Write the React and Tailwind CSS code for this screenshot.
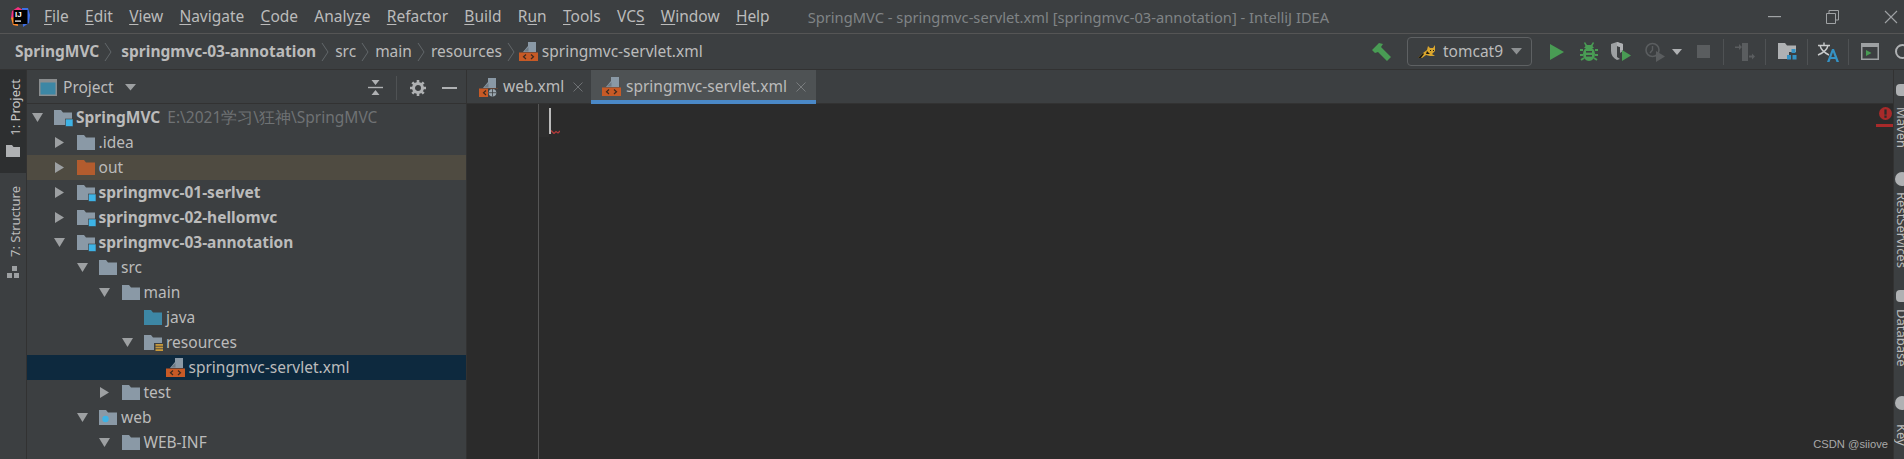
import React from "react";

const U = ({ children }) => <span className="underline underline-offset-2">{children}</span>;

function Logo() {
  return (
    <svg width="22" height="22" viewBox="0 0 22 22" className="shrink-0">
      <path d="M3 5 L9 1 L14 4 L8 12 L2 12 Z" fill="#f5317f" />
      <path d="M2 12 L8 10 L9 20 L4 19 Z" fill="#ff8a2a" />
      <path d="M13 2 L19 2 L21 9 L20 17 L14 21 Z" fill="#3d6fe8" />
      <rect x="4.5" y="4" width="14" height="14" fill="#000" />
      <text x="6" y="11" fontSize="8" fontWeight="700" fill="#fff" fontFamily="Liberation Sans">IJ</text>
      <rect x="6" y="14.5" width="6" height="1.2" fill="#fff" />
    </svg>
  );
}

function Folder({ color = "#8a99a6", badge, className = "" }) {
  return (
    <svg width="18" height="15" viewBox="0 0 18 15" className={`shrink-0 overflow-visible ${className}`}>
      <path d="M0 0 H7 L9 2.5 H18 V15 H0 Z" fill={color} />
      {badge === "module" && <rect x="11.5" y="9" width="7.5" height="7.5" fill="#3db3e6" stroke="#3c3f41" strokeWidth="0.6" />}
      {badge === "web" && <circle cx="6.5" cy="9" r="3.2" fill="#3db3e6" />}
      {badge === "res" && (
        <g>
          <rect x="10" y="8" width="9" height="8" fill="#3c3f41" />
          <rect x="11.5" y="9" width="7.5" height="1.8" fill="#c99a3a" />
          <rect x="11.5" y="11.6" width="7.5" height="1.8" fill="#c99a3a" />
          <rect x="11.5" y="14.2" width="7.5" height="1.8" fill="#c99a3a" />
        </g>
      )}
    </svg>
  );
}

function XmlIcon({ globe }) {
  return (
    <svg width="19" height="19" viewBox="0 0 19 19" className="shrink-0">
      <path d="M4 10 L9 4 V0 H17 V10 Z" fill="#8a99a6" />
      <path d="M5 9.5 H9.5 V5 Z" fill="#6e7a84" />
      <rect x="0" y="10.5" width="19" height="8.5" fill="#c75a26" />
      <path d="M7 12.5 L4.5 14.7 L7 17 M12 12.5 L14.5 14.7 L12 17" stroke="#3c2a20" strokeWidth="1.2" fill="none" />
      {globe && (
        <g>
          <rect x="9" y="10.5" width="10" height="8.5" fill="#3c3f41" />
          <circle cx="13.5" cy="14.7" r="3.8" fill="#9aa7b0" />
          <path d="M10 14.7 H17 M13.5 11 V18.4" stroke="#3c3f41" strokeWidth="0.8" />
        </g>
      )}
    </svg>
  );
}

function Arrow({ open }) {
  return open ? (
    <svg width="11" height="9" viewBox="0 0 11 9"><path d="M0 0 H11 L5.5 9 Z" fill="#9da0a2" /></svg>
  ) : (
    <svg width="9" height="11" viewBox="0 0 9 11"><path d="M0 0 L9 5.5 L0 11 Z" fill="#9da0a2" /></svg>
  );
}

function Chevron() {
  return (
    <svg width="8" height="20" viewBox="0 0 8 20" className="shrink-0">
      <path d="M1 1 L7 10 L1 19" stroke="#62676a" strokeWidth="1" fill="none" />
    </svg>
  );
}

function Hammer() {
  return (
    <svg width="20" height="18" viewBox="0 0 20 18">
      <path d="M0 7 L7 0 L11 1 L9 4 L19 14 L15 18 L6 9 L3 10 Z" fill="#499c54" />
    </svg>
  );
}

function Tomcat() {
  return (
    <svg width="18" height="14" viewBox="0 0 18 14">
      <path d="M0 13 L5 8 L9 5 L10 1 L12 3 L15 3 L17 0 L17 6 L14 9 L17 11 L12 11 L8 10 L4 13 Z" fill="#d9a62e" />
      <path d="M0 13 L5 8 L6 9 L3 13 Z M9 6 L12 9 L8 9 Z" fill="#1e1a10" />
      <path d="M12 5 h1 v1 h-1z M15 5 h1 v1 h-1z" fill="#1e1a10" />
    </svg>
  );
}

function Play({ size = 16 }) {
  return <svg width={size} height={size + 2} viewBox="0 0 16 18"><path d="M1 1 L15 9 L1 17 Z" fill="#499c54" /></svg>;
}

function Bug() {
  return (
    <svg width="18" height="20" viewBox="0 0 18 20">
      <path d="M5 0 L7 3 H11 L13 0 L14 1 L12.5 4 L14 6 H4 L5.5 4 L4 1 Z" fill="#499c54" />
      <ellipse cx="9" cy="12" rx="6" ry="7" fill="#499c54" />
      <path d="M0 8 H3 M0 13 H3 M1 18 L4 16 M18 8 H15 M18 13 H15 M17 18 L14 16" stroke="#499c54" strokeWidth="2" />
      <rect x="6" y="9" width="6" height="1.6" fill="#3c3f41" />
      <rect x="6" y="13" width="6" height="1.6" fill="#3c3f41" />
    </svg>
  );
}

function Coverage() {
  return (
    <svg width="20" height="20" viewBox="0 0 20 20">
      <path d="M0 2 L6 0 L12 2 V9 L9 11 V5 L6 4 L6 15 L9 17 L6 18 C2 16 0 13 0 9 Z" fill="#9da0a2" />
      <path d="M6 0 L12 2 V8 H9 V5 L6 4 Z" fill="#afb1b3" />
      <path d="M11 8 L20 13.5 L11 19 Z" fill="#499c54" />
    </svg>
  );
}

function Profile() {
  return (
    <svg width="20" height="20" viewBox="0 0 20 20">
      <circle cx="7.5" cy="8" r="6.5" fill="none" stroke="#5a5d5f" strokeWidth="1.6" />
      <path d="M7.5 4 V8 L5 11" stroke="#5a5d5f" strokeWidth="1.4" fill="none" />
      <path d="M11 9 L20 14.5 L11 20 Z" fill="#5a5d5f" />
    </svg>
  );
}

function Caret({ w = 10, color = "#afb1b3" }) {
  return <svg width={w} height={w * 0.6} viewBox="0 0 10 6"><path d="M0 0 H10 L5 6 Z" fill={color} /></svg>;
}

function Attach() {
  return (
    <svg width="20" height="18" viewBox="0 0 20 18">
      <rect x="7" y="0" width="6" height="18" fill="#5a5d5f" />
      <path d="M0 3.5 H4 V1 L7 4 L4 7 V5 H0 Z M14 12.5 H17 V10.5 L20 13.5 L17 16.5 V14.5 H14 Z" fill="#5a5d5f" />
    </svg>
  );
}

function FolderBlue() {
  return (
    <svg width="19" height="17" viewBox="0 0 19 17">
      <path d="M0 0 H7 L9 2.5 H18 V6 H11 V16 H0 Z" fill="#afb1b3" />
      <path d="M11 6 H18 V9 H11 Z" fill="#afb1b3" />
      <rect x="13.5" y="6" width="4" height="4" fill="#3592c4" />
      <rect x="9" y="12" width="4" height="4.5" fill="#3592c4" />
      <rect x="14.5" y="12" width="4" height="4.5" fill="#3592c4" />
    </svg>
  );
}

function Translate() {
  return (
    <svg width="22" height="20" viewBox="0 0 22 20">
      <path d="M1 3.5 H13 M7 0.5 V3.5 M3 3.5 C4 8 8 11 12 13 M11 3.5 C10 8 6 11 1 13" stroke="#c9cbcc" strokeWidth="1.4" fill="none" />
      <path d="M10 20 L15 7 H17 L22 20 H19.5 L18.4 17 H13.6 L12.5 20 Z M14.3 15 H17.7 L16 10.2 Z" fill="#3592c4" fillRule="evenodd" />
    </svg>
  );
}

function Terminal() {
  return (
    <svg width="18" height="17" viewBox="0 0 18 17">
      <rect x="0.75" y="0.75" width="16.5" height="15.5" fill="none" stroke="#9da0a2" strokeWidth="1.5" />
      <rect x="1" y="1" width="16" height="3" fill="#9da0a2" />
      <path d="M5 7 L10.5 10 L5 13 Z" fill="#499c54" />
    </svg>
  );
}

function Sep() {
  return <div className="w-px h-[26px] bg-[#4f5254] shrink-0" />;
}

function Row({ depth, open, noArrow, icon, bold, children, extra, className = "" }) {
  return (
    <div className={`h-[25px] shrink-0 flex items-center whitespace-nowrap ${className}`} style={{ paddingLeft: depth * 22.5 }}>
      <div className="w-[20px] flex justify-center shrink-0">{noArrow ? null : <Arrow open={open} />}</div>
      <div className="ml-[7px] w-[18px] flex justify-center shrink-0">{icon}</div>
      <span className={`ml-[4px] text-[#bbbbbb] ${bold ? "font-bold" : ""}`}>{children}</span>
      {extra && <span className="ml-[7px] text-[#6f7274]">{extra}</span>}
    </div>
  );
}

function VText({ children, className = "" }) {
  return <div className={`[writing-mode:vertical-rl] rotate-180 whitespace-nowrap text-[13px] leading-[20px] ${className}`}>{children}</div>;
}

function RightText({ children, className = "" }) {
  return <div className={`[writing-mode:vertical-rl] whitespace-nowrap text-[13px] leading-[20px] ${className}`}>{children}</div>;
}

export default function App() {
  return (
    <div className="w-[1904px] h-[459px] overflow-hidden flex flex-col bg-[#3c3f41] text-[#bbbbbb] text-[15.5px] font-['Noto_Sans','Open_Sans',sans-serif]">
      {/* Title bar */}
      <div className="h-[34px] shrink-0 flex items-center border-b border-[#555555] relative">
        <div className="ml-[9px] w-[22px]"><Logo /></div>
        <nav className="ml-[13px] pt-[1px] flex gap-[16.3px] text-[#bbbbbb]">
          <span><U>F</U>ile</span>
          <span><U>E</U>dit</span>
          <span><U>V</U>iew</span>
          <span><U>N</U>avigate</span>
          <span><U>C</U>ode</span>
          <span>Analy<U>z</U>e</span>
          <span><U>R</U>efactor</span>
          <span><U>B</U>uild</span>
          <span>R<U>u</U>n</span>
          <span><U>T</U>ools</span>
          <span>VC<U>S</U></span>
          <span><U>W</U>indow</span>
          <span><U>H</U>elp</span>
        </nav>
        <span className="ml-[38px] pt-[1px] text-[14.7px] text-[#808486] whitespace-nowrap">SpringMVC - springmvc-servlet.xml [springmvc-03-annotation] - IntelliJ IDEA</span>
        <div className="ml-auto mr-[6px] flex items-center gap-[45px]">
          <svg width="13" height="2" viewBox="0 0 13 2"><rect width="13" height="1.2" fill="#a0a3a5" /></svg>
          <svg width="13" height="14" viewBox="0 0 13 14"><path d="M3 3 V0.5 H12.5 V10 H10 M0.5 3.5 H9.5 V13.5 H0.5 Z" fill="none" stroke="#a0a3a5" /></svg>
          <svg width="14" height="14" viewBox="0 0 14 14"><path d="M1 1 L13 13 M13 1 L1 13" stroke="#a0a3a5" strokeWidth="1.1" /></svg>
        </div>
      </div>

      {/* Breadcrumb + toolbar */}
      <div className="h-[36px] shrink-0 flex items-center border-b border-[#323232] whitespace-nowrap">
        <div className="ml-[15px] flex items-center gap-[5px]">
          <span className="font-bold">SpringMVC</span>
          <Chevron />
          <span className="font-bold ml-[4px]">springmvc-03-annotation</span>
          <Chevron />
          <span className="ml-[1px]">src</span>
          <Chevron />
          <span className="ml-[1px]">main</span>
          <Chevron />
          <span className="ml-[1px]">resources</span>
          <Chevron />
          <div className="-ml-[1px]"><XmlIcon /></div>
          <span className="-ml-[1px]">springmvc-servlet.xml</span>
        </div>
        <div className="ml-auto flex items-center overflow-hidden">
          <Hammer />
          <div className="ml-[15px] w-[125px] h-[29px] rounded-[4px] border border-[#5e6163] flex items-center pl-[10px]">
            <Tomcat />
            <span className="ml-[7px]">tomcat9</span>
            <span className="ml-auto mr-[9px] flex"><Caret w={11} color="#8d9092" /></span>
          </div>
          <div className="ml-[17px]"><Play /></div>
          <div className="ml-[15px]"><Bug /></div>
          <div className="ml-[13px]"><Coverage /></div>
          <div className="ml-[14px]"><Profile /></div>
          <div className="ml-[7px] flex"><Caret w={10} /></div>
          <div className="ml-[15px] w-[13px] h-[13px] bg-[#5a5d5f]" />
          <div className="ml-[13px]"><Sep /></div>
          <div className="ml-[11px]"><Attach /></div>
          <div className="ml-[10px]"><Sep /></div>
          <div className="ml-[12px]"><FolderBlue /></div>
          <div className="ml-[10px]"><Sep /></div>
          <div className="ml-[9px]"><Translate /></div>
          <div className="ml-[9px]"><Sep /></div>
          <div className="ml-[12px]"><Terminal /></div>
          <div className="ml-[16px] w-[15px] h-[15px] rounded-full border-2 border-[#afb1b3] -mr-[6px] shrink-0" />
        </div>
      </div>

      {/* Main */}
      <div className="flex-1 min-h-0 flex">
        {/* Left strip */}
        <div className="w-[27px] shrink-0 border-r border-[#323232] flex flex-col items-center">
          <div className="w-full h-[103px] bg-[#2d2f30] flex flex-col items-center pt-[9px] text-[#c8c8c8]">
            <VText className="ml-[3px]">1: Project</VText>
            <svg width="14" height="12" viewBox="0 0 14 12" className="mt-[9px]"><path d="M0 0 H6 L7.5 2 H14 V12 H0 Z" fill="#afb1b3" /></svg>
          </div>
          <VText className="mt-[13px] ml-[3px]">7: Structure</VText>
          <svg width="13" height="13" viewBox="0 0 13 13" className="mt-[9px]">
            <rect x="5" y="0" width="5" height="5" fill="#9da0a2" />
            <rect x="0" y="7" width="5" height="5" fill="#9da0a2" />
            <rect x="7" y="7" width="5" height="5" fill="#9da0a2" />
          </svg>
        </div>

        {/* Project panel */}
        <div className="w-[440px] shrink-0 border-r border-[#323232] flex flex-col min-h-0 overflow-hidden">
          <div className="h-[34px] pt-[2px] shrink-0 flex items-center border-b border-[#323232]">
            <svg width="18" height="17" viewBox="0 0 18 17" className="ml-[12px]">
              <rect x="0.75" y="0.75" width="16.5" height="15.5" fill="#3d87a5" stroke="#8a8d8f" strokeWidth="1.5" />
              <rect x="1" y="1" width="16" height="2.5" fill="#8a8d8f" />
            </svg>
            <span className="ml-[6px]">Project</span>
            <span className="ml-[11px] flex"><Caret w={11} color="#9da0a2" /></span>
            <div className="ml-auto flex items-center">
              <svg width="15" height="15" viewBox="0 0 15 15">
                <path d="M0 7.5 H15" stroke="#afb1b3" strokeWidth="1.4" />
                <path d="M3.5 0 H11.5 L7.5 5 Z M7.5 10 L11.5 15 H3.5 Z" fill="#afb1b3" />
              </svg>
              <div className="ml-[13px] w-px h-[24px] bg-[#4f5254]" />
              <svg width="16" height="16" viewBox="0 0 16 16" className="ml-[13px]">
                <circle cx="8" cy="8" r="4.5" fill="none" stroke="#afb1b3" strokeWidth="3" />
                <path d="M8 0 V3 M8 13 V16 M0 8 H3 M13 8 H16 M2.3 2.3 L4.4 4.4 M11.6 11.6 L13.7 13.7 M13.7 2.3 L11.6 4.4 M4.4 11.6 L2.3 13.7" stroke="#afb1b3" strokeWidth="2.6" />
              </svg>
              <div className="ml-[16px] mr-[9px] w-[15px] h-[2px] bg-[#afb1b3]" />
            </div>
          </div>
          <div className="flex flex-col pt-[1px]">
            <Row depth={0} open bold icon={<Folder badge="module" />} extra={<span>E:\2021学习\狂神\SpringMVC</span>}>SpringMVC</Row>
            <Row depth={1} icon={<Folder />}>.idea</Row>
            <Row depth={1} icon={<Folder color="#b35c2e" />} className="bg-[#4f4b41]">out</Row>
            <Row depth={1} bold icon={<Folder badge="module" />}>springmvc-01-serlvet</Row>
            <Row depth={1} bold icon={<Folder badge="module" />}>springmvc-02-hellomvc</Row>
            <Row depth={1} open bold icon={<Folder badge="module" />}>springmvc-03-annotation</Row>
            <Row depth={2} open icon={<Folder />}>src</Row>
            <Row depth={3} open icon={<Folder />}>main</Row>
            <Row depth={4} noArrow icon={<Folder color="#3d87a5" />}>java</Row>
            <Row depth={4} open icon={<Folder badge="res" />}>resources</Row>
            <Row depth={5} noArrow icon={<XmlIcon />} className="bg-[#0d293e]">springmvc-servlet.xml</Row>
            <Row depth={3} icon={<Folder />}>test</Row>
            <Row depth={2} open icon={<Folder badge="web" />}>web</Row>
            <Row depth={3} open icon={<Folder />}>WEB-INF</Row>
          </div>
        </div>

        {/* Editor */}
        <div className="flex-1 min-w-0 flex flex-col">
          <div className="h-[34px] shrink-0 flex whitespace-nowrap">
            <div className="w-[124px] shrink-0 flex items-center pl-[12px] pt-[1px] border-b border-[#323232]">
              <XmlIcon globe />
              <span className="ml-[5px]">web.xml</span>
              <svg width="10" height="10" viewBox="0 0 10 10" className="ml-[9px]"><path d="M0.5 0.5 L9.5 9.5 M9.5 0.5 L0.5 9.5" stroke="#6e7174" /></svg>
            </div>
            <div className="w-[225px] shrink-0 flex items-center pl-[11px] pt-[3px] bg-[#4e5254] border-b-4 border-[#4a88c7]">
              <XmlIcon />
              <span className="ml-[5px]">springmvc-servlet.xml</span>
              <svg width="10" height="10" viewBox="0 0 10 10" className="ml-[9px]"><path d="M0.5 0.5 L9.5 9.5 M9.5 0.5 L0.5 9.5" stroke="#797c7e" /></svg>
            </div>
            <div className="flex-1 border-b border-[#323232]" />
          </div>
          <div className="flex-1 min-h-0 flex bg-[#2b2b2b] relative">
            <div className="w-[72px] shrink-0 border-r border-[#555555]" />
            <div className="flex-1 min-w-0">
              <div className="h-[33px] bg-[#2e2e2e] w-[10px]" />
            </div>
            <div className="absolute left-[82px] top-[4px] w-[2px] h-[26px] bg-[#bbbbbb]" />
            <svg width="9" height="4" viewBox="0 0 9 4" className="absolute left-[84px] top-[26px]"><path d="M0 0.5 L3 3.5 L5 1.5 L7 3 L9 1" stroke="#b23a3a" strokeWidth="1.3" fill="none" /></svg>
            <svg width="13" height="13" viewBox="0 0 16 16" className="absolute right-[1px] top-[3px]">
              <circle cx="8" cy="8" r="8" fill="#a82a2a" />
              <rect x="6.6" y="3" width="2.8" height="6.4" fill="#2b2b2b" />
              <rect x="6.6" y="10.5" width="2.8" height="2.8" fill="#2b2b2b" />
            </svg>
            <div className="absolute right-[0px] top-[20px] w-[17px] h-[3px] bg-[#a82a2a]" />
            <span className="absolute right-[5px] bottom-[7px] text-[11.2px] leading-[16px] text-[#a9a9a9] font-['Liberation_Sans',sans-serif]">CSDN @siiove</span>
          </div>
        </div>

        {/* Right strip */}
        <div className="w-[11px] shrink-0 border-l border-[#323232] overflow-hidden flex flex-col text-[#bbbbbb]">
          <div className="w-[16px] flex flex-col items-center">
            <div className="w-[12px] h-[12px] mt-[14px] shrink-0 rounded-sm bg-[#afb1b3]" />
            <RightText className="mt-[11px]">Maven</RightText>
            <div className="w-[14px] h-[14px] mt-[24px] shrink-0 rounded-full bg-[#afb1b3]" />
            <RightText className="mt-[6px]">RestServices</RightText>
            <div className="w-[12px] h-[12px] mt-[22px] shrink-0 rounded-sm bg-[#afb1b3]" />
            <RightText className="mt-[7px]">Database</RightText>
            <div className="w-[14px] h-[14px] mt-[29px] shrink-0 rounded-full bg-[#afb1b3]" />
            <RightText className="mt-[14px]">Key</RightText>
          </div>
        </div>
      </div>
    </div>
  );
}
